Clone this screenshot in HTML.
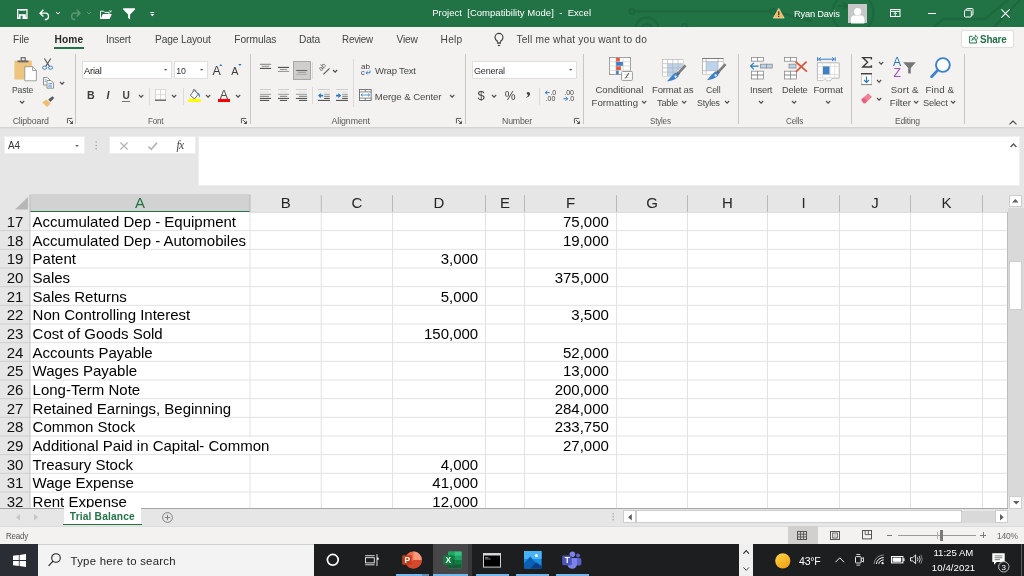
<!DOCTYPE html>
<html><head><meta charset="utf-8"><title>Excel</title>
<style>
html,body{margin:0;padding:0;}
body{width:1024px;height:576px;overflow:hidden;position:relative;background:#e6e6e6;font-family:"Liberation Sans",sans-serif;}
.a{position:absolute;display:block;box-sizing:border-box;}
.t{white-space:pre;}
svg{overflow:visible;}
#w{position:absolute;left:0;top:0;width:1024px;height:576px;will-change:transform;}
</style></head><body><div id="w">
<div class="a" style="left:0.00px;top:0.00px;width:1024.00px;height:27.00px;background:#217346;"></div>
<svg class="a" style="left:600.00px;top:0.00px;" width="424.00" height="27.00" viewBox="600 0 424 27"><defs><clipPath id="cpTB"><rect x="600" y="0" width="424" height="27"/></clipPath></defs><g clip-path="url(#cpTB)" fill="none" stroke="#1d683e" stroke-width="2.4"><circle cx="632" cy="11.3" r="2.6"/><path fill="none" d="M635 11.3 H770"/><circle cx="773" cy="11.3" r="2.6"/><path fill="none" d="M776 12 L812 21"/><circle cx="647" cy="29" r="11.5"/><circle cx="647" cy="29" r="5"/><circle cx="684.5" cy="26.5" r="2.6"/><circle cx="853" cy="13" r="20.5"/><path fill="none" d="M838 6 H846 M843 2 L847 6 L843 10"/><path fill="none" d="M933 28 L943 19 H985 L1009 -1"/><path fill="none" d="M993 28 L1021 -1"/></g></svg>
<svg class="a" style="left:16.60px;top:9.00px;" width="10.60" height="9.90" viewBox="0 0 10.6 9.9"><path d="M0.65 0.65 H9.95 V9.25 H0.65Z" fill="none" stroke="#fff" stroke-width="1.3"/><rect x="1.8" y="5.2" width="7" height="4.4" fill="#fff"/><rect x="3.6" y="6.7" width="1.9" height="3.2" fill="#217346"/><rect x="2.4" y="0.4" width="5.8" height="1.2" fill="#fff"/></svg>
<svg class="a" style="left:39.20px;top:8.60px;" width="12.10" height="11.00" viewBox="0 0 11.5 10.5"><path d="M4.2 0.8 L1 4 L4.2 7.2 M1 4 H7.2 A3.3 3.3 0 0 1 7.2 10 H5.5" fill="none" stroke="#fff" stroke-width="1.3"/></svg>
<svg class="a" style="left:55.00px;top:11.30px;" width="6.00" height="4.00" viewBox="-3.0 -2.0 6.0 4.0"><path d="M-2.0 -1.0 L0 1.0 L2.0 -1.0" fill="none" stroke="#fff" stroke-width="1"/></svg>
<svg class="a" style="left:69.40px;top:8.60px;" width="12.10" height="11.00" viewBox="0 0 11.5 10.5"><path d="M7.3 0.8 L10.5 4 L7.3 7.2 M10.5 4 H4.3 A3.3 3.3 0 0 0 4.3 10 H6" fill="none" stroke="#5f9a7b" stroke-width="1.3"/></svg>
<svg class="a" style="left:85.80px;top:11.30px;" width="6.00" height="4.00" viewBox="-3.0 -2.0 6.0 4.0"><path d="M-2.0 -1.0 L0 1.0 L2.0 -1.0" fill="none" stroke="#5f9a7b" stroke-width="1"/></svg>
<svg class="a" style="left:100.00px;top:9.50px;" width="12.00" height="9.50" viewBox="0 0 12 9.5"><path d="M0.5 9 V1.2 H3.6 L4.8 2.4 H9 V4" fill="none" stroke="#fff" stroke-width="1"/><path d="M0.6 9 L2.8 4 H11.8 L9.6 9Z" fill="#fff"/><path d="M9.5 0.3 L11 1.8 M11 0.3 V1.9 H9.4" fill="none" stroke="#fff" stroke-width="0.7"/></svg>
<svg class="a" style="left:122.80px;top:8.40px;" width="12.20" height="11.60" viewBox="0 0 12.2 11.6"><path d="M0.2 0.3 H12 V1.4 L7.1 6.4 V11.4 L5.1 10 V6.4 L0.2 1.4Z" fill="#fff"/></svg>
<svg class="a" style="left:150.00px;top:11.70px;" width="4.60" height="4.60" viewBox="0 0 4.6 4.6"><rect x="0.3" y="0" width="4" height="0.9" fill="#fff"/><path d="M0.3 2 H4.3 L2.3 4.3Z" fill="#fff"/></svg>
<div class="a t" style="left:432.20px;top:6.30px;font-size:9.5px;line-height:13px;color:#fff;letter-spacing:0.025px;">Project  [Compatibility Mode]  -  Excel</div>
<svg class="a" style="left:772.50px;top:7.50px;" width="11.50" height="10.50" viewBox="0 0 11.5 10.5"><path d="M5.75 0.4 L11.2 10.1 H0.3Z" fill="#f4b860" stroke="#fde9c4" stroke-width="0.6"/><rect x="5.2" y="3.4" width="1.1" height="3.6" fill="#222"/><rect x="5.2" y="7.8" width="1.1" height="1.2" fill="#222"/></svg>
<div class="a t" style="left:793.50px;top:6.70px;font-size:9.5px;line-height:13px;color:#fff;transform-origin:0 0;transform:scaleX(0.9793);letter-spacing:-0.200px;">Ryan Davis</div>
<div class="a" style="left:848.00px;top:3.50px;width:19.30px;height:19.50px;background:#c8c8c8;"></div>
<svg class="a" style="left:848.00px;top:3.50px;" width="19.30" height="19.50" viewBox="0 0 19.3 19.5"><circle cx="9.7" cy="7.6" r="3.6" fill="#fff"/><path d="M3 19.5 V15 Q3 11.6 6.5 11.4 H12.9 Q16.4 11.6 16.4 15 V19.5Z" fill="#fff"/></svg>
<svg class="a" style="left:889.50px;top:9.30px;" width="10.50" height="8.00" viewBox="0 0 10.5 8"><rect x="0.5" y="0.5" width="9.5" height="7" fill="none" stroke="#fff" stroke-width="1"/><path fill="none" d="M0.5 2.4 H10" stroke="#fff" stroke-width="1"/><path d="M5.25 3.4 V7 M3.6 5 L5.25 3.4 L6.9 5" fill="none" stroke="#fff" stroke-width="0.9"/></svg>
<div class="a" style="left:928.00px;top:12.60px;width:7.60px;height:1.00px;background:#fff;"></div>
<svg class="a" style="left:964.00px;top:8.30px;" width="9.50" height="9.50" viewBox="0 0 9.5 9.5"><rect x="0.5" y="2.2" width="6.8" height="6.8" rx="1" fill="none" stroke="#fff" stroke-width="1"/><path d="M2.3 2 V1.5 Q2.3 0.5 3.3 0.5 H8 Q9 0.5 9 1.5 V6.2 Q9 7.2 8 7.2 H7.6" fill="none" stroke="#fff" stroke-width="1"/></svg>
<svg class="a" style="left:1001.00px;top:8.60px;" width="9.00" height="9.00" viewBox="0 0 9 9"><path fill="none" d="M0.4 0.4 L8.6 8.6 M8.6 0.4 L0.4 8.6" stroke="#fff" stroke-width="1.1"/></svg>
<div class="a" style="left:0.00px;top:27.00px;width:1024.00px;height:100.00px;background:#f3f2f1;"></div>
<div class="a t" style="left:13.00px;top:33.00px;font-size:10.2px;line-height:13px;color:#444;letter-spacing:-0.045px;">File</div>
<div class="a t" style="left:54.40px;top:33.00px;font-size:10.2px;line-height:13px;color:#2b2b2b;font-weight:700;letter-spacing:0.187px;">Home</div>
<div class="a" style="left:54.00px;top:46.70px;width:30.00px;height:2.60px;background:#217346;"></div>
<div class="a t" style="left:106.00px;top:33.00px;font-size:10.2px;line-height:13px;color:#444;letter-spacing:-0.142px;">Insert</div>
<div class="a t" style="left:155.00px;top:33.00px;font-size:10.2px;line-height:13px;color:#444;letter-spacing:-0.148px;">Page Layout</div>
<div class="a t" style="left:234.30px;top:33.00px;font-size:10.2px;line-height:13px;color:#444;letter-spacing:-0.044px;">Formulas</div>
<div class="a t" style="left:299.00px;top:33.00px;font-size:10.2px;line-height:13px;color:#444;letter-spacing:-0.081px;">Data</div>
<div class="a t" style="left:342.30px;top:33.00px;font-size:10.2px;line-height:13px;color:#444;transform-origin:0 0;transform:scaleX(0.9617);letter-spacing:-0.200px;">Review</div>
<div class="a t" style="left:396.50px;top:33.00px;font-size:10.2px;line-height:13px;color:#444;letter-spacing:-0.141px;">View</div>
<div class="a t" style="left:440.50px;top:33.00px;font-size:10.2px;line-height:13px;color:#444;letter-spacing:0.274px;">Help</div>
<svg class="a" style="left:493.50px;top:33.00px;" width="10.00" height="13.40" viewBox="0 0 10 13.4"><path d="M3.3 9.2 V8 Q1 6.4 1 4.4 A4 4 0 0 1 9 4.4 Q9 6.4 6.7 8 V9.2" fill="none" stroke="#3e3e3e" stroke-width="1.15"/><path fill="none" d="M3 10 H7" stroke="#3e3e3e" stroke-width="1.5"/><path fill="none" d="M3.9 12.5 H6.1" stroke="#3e3e3e" stroke-width="1.1"/></svg>
<div class="a t" style="left:516.50px;top:33.00px;font-size:10.2px;line-height:13px;color:#444;letter-spacing:0.179px;">Tell me what you want to do</div>
<div class="a" style="left:961.00px;top:30.00px;width:53.30px;height:18.00px;background:#fff;border:1px solid #e1dfdd;border-radius:2px;"></div>
<svg class="a" style="left:968.50px;top:34.30px;" width="9.50" height="9.50" viewBox="0 0 9.5 9.5"><path d="M3.5 2.3 H0.6 V9 H7.4 V6.3" fill="none" stroke="#217346" stroke-width="1"/><path d="M2.8 6.6 Q3 3.3 6.3 3.1 V1.2 L9.1 3.8 L6.3 6.4 V4.6 Q4 4.6 2.8 6.6Z" fill="none" stroke="#217346" stroke-width="0.9"/></svg>
<div class="a t" style="left:980.00px;top:32.60px;font-size:10.2px;line-height:13px;color:#217346;font-weight:700;transform-origin:0 0;transform:scaleX(0.9728);letter-spacing:-0.200px;">Share</div>
<div class="a" style="left:0.00px;top:127.00px;width:1024.00px;height:3.00px;background:linear-gradient(#d2d0ce,#e1e1e1 60%,#e6e6e6);"></div>
<div class="a" style="left:3.60px;top:136.20px;width:81.00px;height:18.20px;background:#fff;border:1px solid #efefef;"></div>
<div class="a t" style="left:7.60px;top:139.00px;font-size:10px;line-height:13px;color:#333;transform-origin:0 0;transform:scaleX(0.9891);letter-spacing:-0.200px;">A4</div>
<svg class="a" style="left:75.00px;top:144.60px;" width="4.00" height="2.00" viewBox="-2.0 -1.0 4.0 2.0"><path d="M-2.0 -1.0 L2.0 -1.0 L0 1.0Z" fill="#666"/></svg>
<svg class="a" style="left:95.00px;top:140.00px;" width="3.00" height="10.00" viewBox="0 0 3 10"><circle cx="1.2" cy="2" r="0.75" fill="#9a9a9a"/><circle cx="1.2" cy="5.4" r="0.75" fill="#9a9a9a"/><circle cx="1.2" cy="8.8" r="0.75" fill="#9a9a9a"/></svg>
<div class="a" style="left:109.00px;top:136.20px;width:87.40px;height:18.20px;background:#fff;border:1px solid #efefef;"></div>
<svg class="a" style="left:119.50px;top:141.50px;" width="8.00" height="8.00" viewBox="0 0 8 8"><path fill="none" d="M0.4 0.4 L7.6 7.6 M7.6 0.4 L0.4 7.6" stroke="#b6b6b6" stroke-width="1.35"/></svg>
<svg class="a" style="left:148.00px;top:141.50px;" width="9.50" height="8.00" viewBox="0 0 9.5 8"><path d="M0.5 4.6 L3.3 7.3 L9 0.6" fill="none" stroke="#b6b6b6" stroke-width="1.7"/></svg>
<div class="a t" style="left:176.5px;top:138px;font-family:'Liberation Serif',serif;font-style:italic;font-size:11.5px;line-height:14px;color:#444;letter-spacing:-0.6px;">fx</div>
<div class="a" style="left:198.30px;top:136.20px;width:822.00px;height:49.60px;background:#fff;border:1px solid #efefef;"></div>
<svg class="a" style="left:1009.50px;top:143.00px;" width="7.00" height="4.50" viewBox="0 0 7 4.5"><path d="M0.6 4 L3.5 1 L6.4 4" fill="none" stroke="#555" stroke-width="1.3"/></svg>
<div class="a" style="left:74.70px;top:54.00px;width:1.00px;height:70.00px;background:#c8c6c4;"></div>
<div class="a" style="left:250.10px;top:54.00px;width:1.00px;height:70.00px;background:#c8c6c4;"></div>
<div class="a" style="left:465.10px;top:54.00px;width:1.00px;height:70.00px;background:#c8c6c4;"></div>
<div class="a" style="left:583.20px;top:54.00px;width:1.00px;height:70.00px;background:#c8c6c4;"></div>
<div class="a" style="left:738.00px;top:54.00px;width:1.00px;height:70.00px;background:#c8c6c4;"></div>
<div class="a" style="left:850.70px;top:54.00px;width:1.00px;height:70.00px;background:#c8c6c4;"></div>
<div class="a" style="left:963.70px;top:54.00px;width:1.00px;height:70.00px;background:#c8c6c4;"></div>
<svg class="a" style="left:13.70px;top:56.80px;" width="22.80" height="24.20" viewBox="0 0 22.8 24.2"><rect x="0.4" y="3.4" width="17.4" height="19.1" rx="0.6" fill="#eec57f"/><rect x="7.2" y="0.7" width="4" height="3.4" fill="none" stroke="#6a6a6a" stroke-width="1.2"/><rect x="3.5" y="3.5" width="10.9" height="1.9" fill="#6a6a6a"/><path d="M10.8 9.7 H18.6 L22.4 13.5 V23.8 H10.8Z" fill="#fff" stroke="#8a8a8a" stroke-width="0.8"/><path d="M18.6 9.7 V13.5 H22.4" fill="none" stroke="#8a8a8a" stroke-width="0.8"/></svg>
<div class="a t" style="left:12.20px;top:83.00px;font-size:9.6px;line-height:13px;color:#484848;transform-origin:0 0;transform:scaleX(0.9011);letter-spacing:-0.200px;">Paste</div>
<svg class="a" style="left:19.40px;top:99.95px;" width="6.20" height="4.10" viewBox="-3.1 -2.05 6.2 4.1"><path d="M-2.1 -1.05 L0 1.05 L2.1 -1.05" fill="none" stroke="#505050" stroke-width="1.15"/></svg>
<svg class="a" style="left:42.00px;top:57.60px;" width="11.00" height="11.80" viewBox="0 0 11 11.8"><path d="M2.4 0.5 L7.4 8.2 M8.8 0.5 L3.8 8.2" fill="none" stroke="#505050" stroke-width="1.1"/><ellipse cx="2.6" cy="9.7" rx="2.1" ry="1.6" fill="none" stroke="#2b78c4" stroke-width="0.9"/><ellipse cx="8.6" cy="9.7" rx="2.1" ry="1.6" fill="none" stroke="#2b78c4" stroke-width="0.9"/></svg>
<svg class="a" style="left:42.50px;top:77.20px;" width="11.00" height="11.60" viewBox="0 0 11 11.6"><path d="M0.5 0.5 H4.3 L6.4 2.6 V8 H0.5Z" fill="#fff" stroke="#777" stroke-width="0.8"/><path d="M4 3.5 H8 L10.5 6 V11.2 H4Z" fill="#fff" stroke="#777" stroke-width="0.8"/><path fill="none" d="M5.3 6.6 H9 M5.3 8.2 H9 M5.3 9.8 H9" stroke="#2b78c4" stroke-width="0.7"/><path fill="none" d="M1.6 2.8 H3.6 M1.6 4.4 H3.2" stroke="#2b78c4" stroke-width="0.7"/></svg>
<svg class="a" style="left:58.90px;top:81.15px;" width="6.20" height="4.10" viewBox="-3.1 -2.05 6.2 4.1"><path d="M-2.1 -1.05 L0 1.05 L2.1 -1.05" fill="none" stroke="#505050" stroke-width="1.15"/></svg>
<svg class="a" style="left:41.80px;top:96.20px;" width="12.40" height="11.20" viewBox="0 0 12.4 11.2"><path d="M6.2 3.6 L10.6 0.2 L12.2 1.9 L8.4 6Z" fill="#5a5a5a"/><path d="M4.6 3.6 L8.6 7.4 L5.2 11 L0.2 6.6Z" fill="#eebd6e"/></svg>
<div class="a t" style="left:12.70px;top:115.10px;font-size:8.8px;line-height:12px;color:#5a5856;letter-spacing:-0.196px;">Clipboard</div>
<svg class="a" style="left:66.50px;top:118.40px;" width="6.20" height="6.20" viewBox="0 0 6.2 6.2"><path d="M0.45 5.2 V0.45 H5.2" fill="none" stroke="#4a4a4a" stroke-width="0.9"/><path d="M2 2 L5 5" fill="none" stroke="#4a4a4a" stroke-width="0.9"/><path d="M5.9 2.6 V5.9 H2.6Z" fill="#4a4a4a"/></svg>
<div class="a" style="left:82.40px;top:61.30px;width:89.60px;height:18.00px;background:#fff;border:1px solid #e1dfdd;"></div>
<div class="a t" style="left:84.20px;top:63.80px;font-size:9.8px;line-height:13px;color:#222;transform-origin:0 0;transform:scaleX(0.9466);letter-spacing:-0.200px;">Arial</div>
<svg class="a" style="left:164.30px;top:69.35px;" width="3.40" height="1.70" viewBox="-1.7 -0.85 3.4 1.7"><path d="M-1.7 -0.85 L1.7 -0.85 L0 0.85Z" fill="#555"/></svg>
<div class="a" style="left:174.00px;top:61.30px;width:34.00px;height:18.00px;background:#fff;border:1px solid #e1dfdd;"></div>
<div class="a t" style="left:176.20px;top:64.80px;font-size:8.8px;line-height:12px;color:#333;">10</div>
<svg class="a" style="left:200.10px;top:69.35px;" width="3.40" height="1.70" viewBox="-1.7 -0.85 3.4 1.7"><path d="M-1.7 -0.85 L1.7 -0.85 L0 0.85Z" fill="#555"/></svg>
<div class="a t" style="left:212.60px;top:62.80px;font-size:12.4px;line-height:16px;color:#3c3c3c;">A</div>
<svg class="a" style="left:219.40px;top:64.20px;overflow:visible" width="3.60" height="1.90" viewBox="0 0 4 2.4"><path d="M0 2.4 L2 0 L4 2.4Z" fill="#2b78c4"/></svg>
<div class="a t" style="left:231.20px;top:63.80px;font-size:10.8px;line-height:14px;color:#3c3c3c;">A</div>
<svg class="a" style="left:237.50px;top:64.20px;overflow:visible" width="3.80" height="2.00" viewBox="0 0 4 2.4"><path d="M0 0 L2 2.4 L4 0Z" fill="#2b78c4"/></svg>
<div class="a t" style="left:87.00px;top:88.00px;font-size:10.6px;line-height:14px;color:#3b3b3b;font-weight:700;">B</div>
<div class="a t" style="left:106.40px;top:88.00px;font-size:10.6px;line-height:14px;color:#3b3b3b;font-weight:700;font-style:italic;">I</div>
<div class="a t" style="left:122.50px;top:89.00px;font-size:10.2px;line-height:13px;color:#444;font-weight:700;">U</div>
<div class="a" style="left:122.40px;top:100.60px;width:7.80px;height:0.80px;background:#777;"></div>
<svg class="a" style="left:137.50px;top:94.35px;" width="6.20" height="4.10" viewBox="-3.1 -2.05 6.2 4.1"><path d="M-2.1 -1.05 L0 1.05 L2.1 -1.05" fill="none" stroke="#505050" stroke-width="1.15"/></svg>
<div class="a" style="left:149.00px;top:87.50px;width:1.00px;height:17.00px;background:#dcdad8;"></div>
<svg class="a" style="left:154.70px;top:89.00px;" width="11.00" height="11.80" viewBox="0 0 11 11.8"><rect x="0.4" y="0.4" width="10.2" height="10.6" fill="#fff" stroke="#d2d0ce" stroke-width="0.8"/><path fill="none" d="M5.5 0.4 V11 M0.4 5.7 H10.6" stroke="#d2d0ce" stroke-width="0.8"/><path fill="none" d="M0 11.2 H11" stroke="#555" stroke-width="1.2"/></svg>
<svg class="a" style="left:171.30px;top:94.35px;" width="6.20" height="4.10" viewBox="-3.1 -2.05 6.2 4.1"><path d="M-2.1 -1.05 L0 1.05 L2.1 -1.05" fill="none" stroke="#505050" stroke-width="1.15"/></svg>
<div class="a" style="left:182.80px;top:87.50px;width:1.00px;height:17.00px;background:#dcdad8;"></div>
<svg class="a" style="left:187.50px;top:88.60px;" width="14.00" height="11.00" viewBox="0 0 14 11"><path d="M2.4 6.3 L6.2 1.4 L10.3 5.1 L6.5 9.9Z" fill="#fff" stroke="#5a5a5a" stroke-width="0.9"/><path d="M5.2 2.6 Q4.4 0.3 6.2 0.4 Q7.7 0.5 8.4 3.2" fill="none" stroke="#6a6a6a" stroke-width="0.8"/><path d="M9.6 3.5 Q12.4 4.4 11.9 9 Q10.9 6.2 9.9 5.3Z" fill="#2b78c4"/></svg>
<div class="a" style="left:187.80px;top:99.00px;width:13.20px;height:2.70px;background:#ffff00;"></div>
<svg class="a" style="left:204.90px;top:94.35px;" width="6.20" height="4.10" viewBox="-3.1 -2.05 6.2 4.1"><path d="M-2.1 -1.05 L0 1.05 L2.1 -1.05" fill="none" stroke="#505050" stroke-width="1.15"/></svg>
<div class="a t" style="left:219.80px;top:87.00px;font-size:12.4px;line-height:16px;color:#505050;">A</div>
<div class="a" style="left:217.80px;top:99.00px;width:12.70px;height:2.80px;background:#ff0000;"></div>
<svg class="a" style="left:234.80px;top:94.35px;" width="6.20" height="4.10" viewBox="-3.1 -2.05 6.2 4.1"><path d="M-2.1 -1.05 L0 1.05 L2.1 -1.05" fill="none" stroke="#505050" stroke-width="1.15"/></svg>
<div class="a t" style="left:148.20px;top:115.10px;font-size:8.8px;line-height:12px;color:#5a5856;transform-origin:0 0;transform:scaleX(0.9114);letter-spacing:-0.200px;">Font</div>
<svg class="a" style="left:241.40px;top:118.40px;" width="6.20" height="6.20" viewBox="0 0 6.2 6.2"><path d="M0.45 5.2 V0.45 H5.2" fill="none" stroke="#4a4a4a" stroke-width="0.9"/><path d="M2 2 L5 5" fill="none" stroke="#4a4a4a" stroke-width="0.9"/><path d="M5.9 2.6 V5.9 H2.6Z" fill="#4a4a4a"/></svg>
<svg class="a" style="left:0.00px;top:0.00px;" width="1.00" height="1.00" viewBox="0 0 1 1"><path d="M259.90 64.30 H271.10" stroke="#7a7a7a" stroke-width="0.95" fill="none"/><path d="M261.80 66.30 H269.10" stroke="#8a8a8a" stroke-width="0.95" fill="none"/><path d="M259.90 68.40 H271.10" stroke="#4a4a4a" stroke-width="1.1" fill="none"/></svg>
<svg class="a" style="left:0.00px;top:0.00px;" width="1.00" height="1.00" viewBox="0 0 1 1"><path d="M277.90 67.40 H289.10" stroke="#4a4a4a" stroke-width="1.1" fill="none"/><path d="M279.90 69.40 H287.20" stroke="#8a8a8a" stroke-width="0.95" fill="none"/><path d="M277.90 71.40 H289.10" stroke="#8a8a8a" stroke-width="0.95" fill="none"/></svg>
<div class="a" style="left:293.00px;top:61.00px;width:17.50px;height:18.60px;background:#d0cecc;border:1px solid #a9a7a5;"></div>
<svg class="a" style="left:0.00px;top:0.00px;" width="1.00" height="1.00" viewBox="0 0 1 1"><path d="M296.20 70.50 H307.20" stroke="#666" stroke-width="1.1" fill="none"/><path d="M298.00 72.40 H305.80" stroke="#999" stroke-width="0.95" fill="none"/><path d="M296.20 74.40 H307.20" stroke="#aaa" stroke-width="0.95" fill="none"/></svg>
<div class="a" style="left:312.00px;top:62.30px;width:1.00px;height:16.80px;background:#dcdad8;"></div>
<svg class="a" style="left:318.60px;top:64.40px;" width="11.50" height="11.50" viewBox="0 0 11.5 11.5"><path fill="none" d="M4.4 10.4 L10.5 4.4" stroke="#555" stroke-width="1.1"/><text x="0" y="0" transform="translate(2.2 7.4) rotate(-48)" font-family="Liberation Sans" font-size="7" fill="#555">ab</text></svg>
<svg class="a" style="left:332.40px;top:68.55px;" width="6.20" height="4.10" viewBox="-3.1 -2.05 6.2 4.1"><path d="M-2.1 -1.05 L0 1.05 L2.1 -1.05" fill="none" stroke="#505050" stroke-width="1.15"/></svg>
<svg class="a" style="left:0.00px;top:0.00px;" width="1.00" height="1.00" viewBox="0 0 1 1"><path d="M259.90 89.50 H271.10" stroke="#cfcdcb" stroke-width="1.0" fill="none"/><path d="M259.90 91.90 H269.20" stroke="#e2e0de" stroke-width="1.0" fill="none"/><path d="M259.90 94.30 H271.10" stroke="#9a9a9a" stroke-width="1.0" fill="none"/><path d="M259.90 96.30 H269.20" stroke="#777" stroke-width="1.0" fill="none"/><path d="M259.90 98.40 H271.10" stroke="#444" stroke-width="1.0" fill="none"/><path d="M259.90 100.40 H269.20" stroke="#444" stroke-width="1.0" fill="none"/></svg>
<svg class="a" style="left:0.00px;top:0.00px;" width="1.00" height="1.00" viewBox="0 0 1 1"><path d="M277.90 89.50 H289.10" stroke="#cfcdcb" stroke-width="1.0" fill="none"/><path d="M279.90 91.90 H287.20" stroke="#e2e0de" stroke-width="1.0" fill="none"/><path d="M277.90 94.30 H289.10" stroke="#9a9a9a" stroke-width="1.0" fill="none"/><path d="M279.90 96.30 H287.20" stroke="#777" stroke-width="1.0" fill="none"/><path d="M277.90 98.40 H289.10" stroke="#444" stroke-width="1.0" fill="none"/><path d="M279.90 100.40 H287.20" stroke="#444" stroke-width="1.0" fill="none"/></svg>
<svg class="a" style="left:0.00px;top:0.00px;" width="1.00" height="1.00" viewBox="0 0 1 1"><path d="M295.90 89.50 H307.10" stroke="#cfcdcb" stroke-width="1.0" fill="none"/><path d="M298.90 91.90 H307.10" stroke="#e2e0de" stroke-width="1.0" fill="none"/><path d="M295.90 94.30 H307.10" stroke="#9a9a9a" stroke-width="1.0" fill="none"/><path d="M298.90 96.30 H307.10" stroke="#777" stroke-width="1.0" fill="none"/><path d="M295.90 98.40 H307.10" stroke="#444" stroke-width="1.0" fill="none"/><path d="M298.90 100.40 H307.10" stroke="#444" stroke-width="1.0" fill="none"/></svg>
<div class="a" style="left:312.00px;top:87.30px;width:1.00px;height:17.00px;background:#dcdad8;"></div>
<svg class="a" style="left:0.00px;top:0.00px;" width="1.00" height="1.00" viewBox="0 0 1 1"><path d="M318.00 89.50 H330.00" stroke="#cfcdcb" stroke-width="1.0" fill="none"/><path d="M324.20 91.90 H329.80" stroke="#e2e0de" stroke-width="1.0" fill="none"/><path d="M324.20 94.30 H329.80" stroke="#9a9a9a" stroke-width="1.0" fill="none"/><path d="M324.20 96.30 H329.80" stroke="#777" stroke-width="1.0" fill="none"/><path d="M324.20 98.40 H329.80" stroke="#444" stroke-width="1.0" fill="none"/><path d="M318.00 100.40 H330.00" stroke="#444" stroke-width="1.0" fill="none"/></svg>
<svg class="a" style="left:318.00px;top:93.00px;" width="5.20" height="5.20" viewBox="0 0 5.2 5.2"><path d="M5.2 1.8 H2.8 V0 L0 2.6 L2.8 5.2 V3.4 H5.2Z" fill="#2b78c4"/></svg>
<svg class="a" style="left:0.00px;top:0.00px;" width="1.00" height="1.00" viewBox="0 0 1 1"><path d="M336.00 89.50 H348.00" stroke="#cfcdcb" stroke-width="1.0" fill="none"/><path d="M342.20 91.90 H347.80" stroke="#e2e0de" stroke-width="1.0" fill="none"/><path d="M342.20 94.30 H347.80" stroke="#9a9a9a" stroke-width="1.0" fill="none"/><path d="M342.20 96.30 H347.80" stroke="#777" stroke-width="1.0" fill="none"/><path d="M342.20 98.40 H347.80" stroke="#444" stroke-width="1.0" fill="none"/><path d="M336.00 100.40 H348.00" stroke="#444" stroke-width="1.0" fill="none"/></svg>
<svg class="a" style="left:336.00px;top:93.00px;" width="5.20" height="5.20" viewBox="0 0 5.2 5.2"><path d="M0 1.8 H2.4 V0 L5.2 2.6 L2.4 5.2 V3.4 H0Z" fill="#2b78c4"/></svg>
<div class="a" style="left:352.80px;top:59.00px;width:1.00px;height:47.60px;background:#dcdad8;"></div>
<svg class="a" style="left:361.00px;top:64.40px;" width="9.60" height="10.60" viewBox="0 0 9.6 10.6"><text x="0" y="5" font-family="Liberation Sans" font-size="7.4" fill="#444" textLength="9" lengthAdjust="spacingAndGlyphs">ab</text><text x="0" y="10.6" font-family="Liberation Sans" font-size="7.4" fill="#444">c</text><path d="M9 6.4 V8.8 H5 M6.6 7.2 L5 8.8 L6.6 10.4" fill="none" stroke="#2b78c4" stroke-width="0.9"/></svg>
<div class="a t" style="left:374.80px;top:63.80px;font-size:9.6px;line-height:13px;color:#484848;transform-origin:0 0;transform:scaleX(0.9937);letter-spacing:-0.200px;">Wrap Text</div>
<svg class="a" style="left:359.00px;top:89.20px;" width="12.60" height="12.00" viewBox="0 0 12.6 12"><rect x="0.45" y="0.45" width="11.7" height="11.1" fill="#fff" stroke="#6a6a6a" stroke-width="0.9"/><path fill="none" d="M6.3 0.4 V2.8 M6.3 9.2 V11.6 M0.4 2.9 H12.2 M0.4 9.1 H12.2" stroke="#6a6a6a" stroke-width="0.8"/><path d="M2 6 H10.6 M3.5 4.6 L2 6 L3.5 7.4 M9.1 4.6 L10.6 6 L9.1 7.4" fill="none" stroke="#2b78c4" stroke-width="0.8"/></svg>
<div class="a t" style="left:374.80px;top:90.00px;font-size:9.6px;line-height:13px;color:#484848;letter-spacing:-0.074px;">Merge &amp; Center</div>
<svg class="a" style="left:448.60px;top:94.35px;" width="6.20" height="4.10" viewBox="-3.1 -2.05 6.2 4.1"><path d="M-2.1 -1.05 L0 1.05 L2.1 -1.05" fill="none" stroke="#505050" stroke-width="1.15"/></svg>
<div class="a t" style="left:331.50px;top:115.10px;font-size:8.8px;line-height:12px;color:#5a5856;letter-spacing:-0.079px;">Alignment</div>
<svg class="a" style="left:456.20px;top:118.40px;" width="6.20" height="6.20" viewBox="0 0 6.2 6.2"><path d="M0.45 5.2 V0.45 H5.2" fill="none" stroke="#4a4a4a" stroke-width="0.9"/><path d="M2 2 L5 5" fill="none" stroke="#4a4a4a" stroke-width="0.9"/><path d="M5.9 2.6 V5.9 H2.6Z" fill="#4a4a4a"/></svg>
<div class="a" style="left:472.40px;top:61.30px;width:104.20px;height:18.00px;background:#fff;border:1px solid #e1dfdd;"></div>
<div class="a t" style="left:474.00px;top:63.80px;font-size:9.6px;line-height:13px;color:#333;transform-origin:0 0;transform:scaleX(0.9408);letter-spacing:-0.200px;">General</div>
<svg class="a" style="left:568.90px;top:69.35px;" width="3.40" height="1.70" viewBox="-1.7 -0.85 3.4 1.7"><path d="M-1.7 -0.85 L1.7 -0.85 L0 0.85Z" fill="#555"/></svg>
<div class="a t" style="left:477.40px;top:87.20px;font-size:13px;line-height:17px;color:#444;">$</div>
<svg class="a" style="left:491.20px;top:94.35px;" width="6.20" height="4.10" viewBox="-3.1 -2.05 6.2 4.1"><path d="M-2.1 -1.05 L0 1.05 L2.1 -1.05" fill="none" stroke="#505050" stroke-width="1.15"/></svg>
<div class="a t" style="left:504.80px;top:88.30px;font-size:12.2px;line-height:16px;color:#444;">%</div>
<div class="a t" style="left:526px;top:79.4px;font-size:19px;line-height:20px;font-weight:700;color:#444;font-family:'Liberation Serif',serif;">,</div>
<div class="a" style="left:539.00px;top:87.50px;width:1.00px;height:17.00px;background:#dcdad8;"></div>
<svg class="a" style="left:544.60px;top:89.80px;" width="12.00" height="12.00" viewBox="0 0 12 12"><path d="M0.4 2.6 H4.6 M2.3 0.6 L0.4 2.6 L2.3 4.6" fill="none" stroke="#2b78c4" stroke-width="1"/><text x="5.4" y="5" font-family="Liberation Sans" font-size="7" fill="#444">.0</text><text x="0.6" y="11.2" font-family="Liberation Sans" font-size="7" fill="#444">.00</text></svg>
<svg class="a" style="left:562.80px;top:89.80px;" width="12.00" height="12.00" viewBox="0 0 12 12"><text x="1.2" y="5" font-family="Liberation Sans" font-size="7" fill="#444">.00</text><path d="M0.4 8.8 H4.6 M2.7 6.8 L4.6 8.8 L2.7 10.8" fill="none" stroke="#2b78c4" stroke-width="1"/><text x="5.4" y="11.2" font-family="Liberation Sans" font-size="7" fill="#444">.0</text></svg>
<div class="a t" style="left:502.20px;top:115.10px;font-size:8.8px;line-height:12px;color:#5a5856;transform-origin:0 0;transform:scaleX(0.9968);letter-spacing:-0.200px;">Number</div>
<svg class="a" style="left:574.30px;top:118.40px;" width="6.20" height="6.20" viewBox="0 0 6.2 6.2"><path d="M0.45 5.2 V0.45 H5.2" fill="none" stroke="#4a4a4a" stroke-width="0.9"/><path d="M2 2 L5 5" fill="none" stroke="#4a4a4a" stroke-width="0.9"/><path d="M5.9 2.6 V5.9 H2.6Z" fill="#4a4a4a"/></svg>
<svg class="a" style="left:609.00px;top:57.20px;" width="24.00" height="24.00" viewBox="0 0 24 24"><rect x="0.4" y="0.4" width="21.2" height="17.2" fill="#fff" stroke="#8a8a8a" stroke-width="0.8"/><path fill="none" d="M0.4 4.7 H21.6 M0.4 9 H21.6 M0.4 13.3 H21.6 M6.8 0.4 V17.6 M14.2 0.4 V17.6" stroke="#cfcfcf" stroke-width="0.7"/><rect x="7.1" y="0.7" width="3.7" height="3.8" fill="#e0593a"/><rect x="7.1" y="5" width="6.8" height="3.8" fill="#3f7fc4"/><rect x="7.1" y="9.3" width="4.8" height="3.8" fill="#e0593a"/><rect x="7.1" y="13.6" width="2.6" height="3.7" fill="#3f7fc4"/><rect x="12.6" y="14.5" width="10.8" height="8.9" rx="1" fill="#fff" stroke="#8e8e8e" stroke-width="0.9"/><path fill="none" d="M15.4 17.3 H20.7 M15.4 20.4 H20.7" stroke="#c6c6c6" stroke-width="0.7"/><path fill="none" d="M16.3 21.5 L19.8 16.1" stroke="#333" stroke-width="0.9"/></svg>
<div class="a t" style="left:595.40px;top:83.00px;font-size:9.6px;line-height:13px;color:#484848;letter-spacing:-0.013px;">Conditional</div>
<div class="a t" style="left:591.50px;top:95.70px;font-size:9.6px;line-height:13px;color:#484848;letter-spacing:0.069px;">Formatting</div>
<svg class="a" style="left:640.80px;top:100.15px;" width="6.20" height="4.10" viewBox="-3.1 -2.05 6.2 4.1"><path d="M-2.1 -1.05 L0 1.05 L2.1 -1.05" fill="none" stroke="#505050" stroke-width="1.15"/></svg>
<svg class="a" style="left:662.40px;top:58.60px;" width="25.00" height="23.00" viewBox="0 0 25 23"><defs><clipPath id="cpT"><path fill="none" d="M0 0 H21.5 V7 L9 17.6 H0Z"/></clipPath></defs><g clip-path="url(#cpT)"><rect x="0.35" y="0.35" width="20.9" height="17" fill="#fff" stroke="#b4b4b4" stroke-width="0.7"/><rect x="5.6" y="4.7" width="15.6" height="12.6" fill="#bdd3ec"/><path fill="none" d="M0.4 4.7 H21.2 M0.4 8.9 H21.2 M0.4 13.1 H21.2 M5.6 0.4 V17.3 M10.8 0.4 V17.3 M16 0.4 V17.3" stroke="#b4b4b4" stroke-width="0.7"/></g><g transform="translate(24.2 5.6)"><path d="M-0.7 0.7 L-9.2 10" stroke="#7d7d7d" stroke-width="2.7" fill="none"/><path d="M-7.4 8 L-9.2 10" stroke="#5f6b78" stroke-width="3.3" fill="none"/><path d="M-10.6 7.9 Q-14.2 10.4 -19.2 16.9 Q-11.2 16.2 -7.5 11.7Z" fill="#3b82cc"/><circle cx="-10.6" cy="12" r="1.15" fill="#fff"/></g></svg>
<div class="a t" style="left:651.50px;top:83.00px;font-size:9.6px;line-height:13px;color:#484848;transform-origin:0 0;transform:scaleX(0.9975);letter-spacing:-0.200px;">Format as</div>
<div class="a t" style="left:657.30px;top:95.70px;font-size:9.6px;line-height:13px;color:#484848;transform-origin:0 0;transform:scaleX(0.9527);letter-spacing:-0.200px;">Table</div>
<svg class="a" style="left:681.20px;top:100.15px;" width="6.20" height="4.10" viewBox="-3.1 -2.05 6.2 4.1"><path d="M-2.1 -1.05 L0 1.05 L2.1 -1.05" fill="none" stroke="#505050" stroke-width="1.15"/></svg>
<svg class="a" style="left:702.20px;top:57.60px;" width="25.00" height="24.00" viewBox="0 0 25 24"><defs><clipPath id="cpC"><path fill="none" d="M0 0 H21.6 V7.6 L11 16.6 H0Z"/></clipPath></defs><g clip-path="url(#cpC)"><rect x="0.35" y="0.35" width="20.9" height="16" fill="#fff" stroke="#9a9a9a" stroke-width="0.7"/><rect x="4.1" y="3.4" width="12" height="9.3" fill="#bdd3ec"/><path fill="none" d="M0.4 3.4 H21.2 M0.4 12.7 H21.2 M4.1 0.4 V16.3 M16.1 0.4 V16.3" stroke="#b0b0b0" stroke-width="0.7"/><path fill="none" d="M0 0.5 H21.6" stroke="#7a7a7a" stroke-width="1"/></g><g transform="translate(24.2 5.4)"><path d="M-0.7 0.7 L-9.2 10" stroke="#7d7d7d" stroke-width="2.7" fill="none"/><path d="M-7.4 8 L-9.2 10" stroke="#5f6b78" stroke-width="3.3" fill="none"/><path d="M-10.6 7.9 Q-14.2 10.4 -19.2 16.9 Q-11.2 16.2 -7.5 11.7Z" fill="#3b82cc"/><circle cx="-10.6" cy="12" r="1.15" fill="#fff"/></g></svg>
<div class="a t" style="left:706.40px;top:83.00px;font-size:9.6px;line-height:13px;color:#484848;transform-origin:0 0;transform:scaleX(0.9161);letter-spacing:-0.200px;">Cell</div>
<div class="a t" style="left:697.40px;top:95.70px;font-size:9.6px;line-height:13px;color:#484848;transform-origin:0 0;transform:scaleX(0.9148);letter-spacing:-0.200px;">Styles</div>
<svg class="a" style="left:723.50px;top:100.15px;" width="6.20" height="4.10" viewBox="-3.1 -2.05 6.2 4.1"><path d="M-2.1 -1.05 L0 1.05 L2.1 -1.05" fill="none" stroke="#505050" stroke-width="1.15"/></svg>
<div class="a t" style="left:649.70px;top:115.10px;font-size:8.8px;line-height:12px;color:#5a5856;transform-origin:0 0;transform:scaleX(0.9101);letter-spacing:-0.200px;">Styles</div>
<svg class="a" style="left:750.30px;top:57.40px;" width="22.60" height="22.40" viewBox="0 0 22.6 22.4"><rect x="1.4" y="0.4" width="6" height="3.8" fill="#fff" stroke="#8a8a8a" stroke-width="0.8"/><rect x="7.4" y="0.4" width="6" height="3.8" fill="#fff" stroke="#8a8a8a" stroke-width="0.8"/><rect x="1.4" y="14.2" width="6" height="3.9" fill="#fff" stroke="#8a8a8a" stroke-width="0.8"/><rect x="7.4" y="14.2" width="6" height="3.9" fill="#fff" stroke="#8a8a8a" stroke-width="0.8"/><rect x="1.4" y="18.1" width="6" height="3.9" fill="#fff" stroke="#8a8a8a" stroke-width="0.8"/><rect x="7.4" y="18.1" width="6" height="3.9" fill="#fff" stroke="#8a8a8a" stroke-width="0.8"/><rect x="10.6" y="7.2" width="5.8" height="3.8" fill="#bdd3ec" stroke="#8a8a8a" stroke-width="0.8"/><rect x="16.4" y="7.2" width="5.8" height="3.8" fill="#bdd3ec" stroke="#8a8a8a" stroke-width="0.8"/><path d="M8.6 9.1 H0.6 M3.8 5.8 L0.6 9.1 L3.8 12.4" fill="none" stroke="#2b78c4" stroke-width="1.2"/></svg>
<div class="a t" style="left:750.30px;top:83.00px;font-size:9.6px;line-height:13px;color:#484848;transform-origin:0 0;transform:scaleX(0.9736);letter-spacing:-0.200px;">Insert</div>
<svg class="a" style="left:757.90px;top:100.15px;" width="6.20" height="4.10" viewBox="-3.1 -2.05 6.2 4.1"><path d="M-2.1 -1.05 L0 1.05 L2.1 -1.05" fill="none" stroke="#505050" stroke-width="1.15"/></svg>
<svg class="a" style="left:784.00px;top:57.40px;" width="23.40" height="22.40" viewBox="0 0 23.4 22.4"><rect x="0.4" y="0.4" width="6" height="3.8" fill="#fff" stroke="#8a8a8a" stroke-width="0.8"/><rect x="6.4" y="0.4" width="6" height="3.8" fill="#fff" stroke="#8a8a8a" stroke-width="0.8"/><rect x="0.4" y="14.2" width="6" height="3.9" fill="#fff" stroke="#8a8a8a" stroke-width="0.8"/><rect x="6.4" y="14.2" width="6" height="3.9" fill="#fff" stroke="#8a8a8a" stroke-width="0.8"/><rect x="0.4" y="18.1" width="6" height="3.9" fill="#fff" stroke="#8a8a8a" stroke-width="0.8"/><rect x="6.4" y="18.1" width="6" height="3.9" fill="#fff" stroke="#8a8a8a" stroke-width="0.8"/><rect x="5" y="7.2" width="7" height="3.8" fill="#bdd3ec" stroke="#8a8a8a" stroke-width="0.8"/><path d="M11.6 4.8 L23 14.6 M22.6 4.6 L11.8 14.8" fill="none" stroke="#d9583b" stroke-width="1.8"/></svg>
<div class="a t" style="left:782.20px;top:83.00px;font-size:9.6px;line-height:13px;color:#484848;transform-origin:0 0;transform:scaleX(0.9608);letter-spacing:-0.200px;">Delete</div>
<svg class="a" style="left:790.70px;top:100.15px;" width="6.20" height="4.10" viewBox="-3.1 -2.05 6.2 4.1"><path d="M-2.1 -1.05 L0 1.05 L2.1 -1.05" fill="none" stroke="#505050" stroke-width="1.15"/></svg>
<svg class="a" style="left:817.00px;top:56.60px;" width="22.60" height="24.40" viewBox="0 0 22.6 24.4"><path d="M1.6 2.2 H17.2 M3.8 0.4 L1.6 2.2 L3.8 4 M15 0.4 L17.2 2.2 L15 4 M0.6 0.2 V4.2 M18.2 0.2 V4.2" fill="none" stroke="#2b78c4" stroke-width="0.95"/><path d="M0.4 5.8 H22.2 V21.2 H0.4Z" fill="#fff" stroke="#a6a6a6" stroke-width="0.8"/><path d="M5.6 5.8 V21.2 M13.2 5.8 V21.2 M17.8 5.8 V21.2 M0.4 9.4 H22.2 M0.4 17.6 H22.2" fill="none" stroke="#d6d6d6" stroke-width="0.7"/><rect x="6" y="9.4" width="6.5" height="8" fill="#3f7fc4"/><path d="M0.4 21.2 V23.6 H6 L7.4 22.2 H8.6 L9.8 23.8 H13.4 L15.4 21.2" fill="#fff" stroke="#b0b0b0" stroke-width="0.7"/></svg>
<div class="a t" style="left:813.40px;top:83.00px;font-size:9.6px;line-height:13px;color:#484848;letter-spacing:-0.160px;">Format</div>
<svg class="a" style="left:824.70px;top:100.15px;" width="6.20" height="4.10" viewBox="-3.1 -2.05 6.2 4.1"><path d="M-2.1 -1.05 L0 1.05 L2.1 -1.05" fill="none" stroke="#505050" stroke-width="1.15"/></svg>
<div class="a t" style="left:785.80px;top:115.10px;font-size:8.8px;line-height:12px;color:#5a5856;transform-origin:0 0;transform:scaleX(0.9169);letter-spacing:-0.200px;">Cells</div>
<svg class="a" style="left:861.70px;top:56.80px;" width="10.00" height="10.60" viewBox="0 0 10 10.6"><path d="M9.4 2.4 V0.6 H0.8 L5.6 5.3 L0.8 10 H9.4 V8.2" fill="none" stroke="#3b3b3b" stroke-width="1.4"/></svg>
<svg class="a" style="left:877.50px;top:60.75px;" width="6.20" height="4.10" viewBox="-3.1 -2.05 6.2 4.1"><path d="M-2.1 -1.05 L0 1.05 L2.1 -1.05" fill="none" stroke="#505050" stroke-width="1.15"/></svg>
<svg class="a" style="left:861.00px;top:73.40px;" width="11.00" height="12.20" viewBox="0 0 11 12.2"><rect x="0.45" y="1.2" width="10.1" height="10.3" fill="#fff" stroke="#c4c4c4" stroke-width="0.8"/><path fill="none" d="M0 0.7 H11" stroke="#444" stroke-width="1.4"/><path fill="none" d="M0 11.6 H11" stroke="#7a7a7a" stroke-width="0.9"/><path d="M5.5 3.4 V9.4 M3 7 L5.5 9.5 L8 7" fill="none" stroke="#2b78c4" stroke-width="1.1"/></svg>
<svg class="a" style="left:875.60px;top:78.55px;" width="6.20" height="4.10" viewBox="-3.1 -2.05 6.2 4.1"><path d="M-2.1 -1.05 L0 1.05 L2.1 -1.05" fill="none" stroke="#505050" stroke-width="1.15"/></svg>
<svg class="a" style="left:861.00px;top:93.00px;" width="11.20" height="10.40" viewBox="0 0 11.2 10.4"><path d="M0.2 6.8 L7.2 0.2 L11 4 L4.2 10.2 H2.6Z" fill="#f08098"/><path d="M0.2 6.8 L2.6 4.5 L6.4 8.2 L4.2 10.2 H2.6Z" fill="#e8607e"/></svg>
<svg class="a" style="left:875.60px;top:96.75px;" width="6.20" height="4.10" viewBox="-3.1 -2.05 6.2 4.1"><path d="M-2.1 -1.05 L0 1.05 L2.1 -1.05" fill="none" stroke="#505050" stroke-width="1.15"/></svg>
<div class="a t" style="left:892.90px;top:54.20px;font-size:12.2px;line-height:16px;color:#2b78c4;">A</div>
<div class="a t" style="left:893.40px;top:65.20px;font-size:12.2px;line-height:16px;color:#a24fc0;">Z</div>
<svg class="a" style="left:903.40px;top:62.00px;" width="13.00" height="12.00" viewBox="0 0 13 12"><path d="M0.2 0.3 H12.8 L7.8 6 V11.6 L5.2 11.6 V6Z" fill="#767676"/></svg>
<div class="a t" style="left:890.80px;top:83.00px;font-size:9.6px;line-height:13px;color:#484848;letter-spacing:0.165px;">Sort &amp;</div>
<div class="a t" style="left:889.80px;top:95.70px;font-size:9.6px;line-height:13px;color:#484848;letter-spacing:-0.026px;">Filter</div>
<svg class="a" style="left:912.50px;top:100.15px;" width="6.20" height="4.10" viewBox="-3.1 -2.05 6.2 4.1"><path d="M-2.1 -1.05 L0 1.05 L2.1 -1.05" fill="none" stroke="#505050" stroke-width="1.15"/></svg>
<svg class="a" style="left:929.50px;top:57.40px;" width="21.40" height="22.00" viewBox="0 0 21.4 22"><circle cx="12.9" cy="8" r="6.9" fill="#fff" stroke="#3b82cc" stroke-width="1.9"/><path fill="none" d="M7.6 13.4 L1.6 19.7" stroke="#3b82cc" stroke-width="2.8" stroke-linecap="round"/></svg>
<div class="a t" style="left:925.60px;top:83.00px;font-size:9.6px;line-height:13px;color:#484848;letter-spacing:0.111px;">Find &amp;</div>
<div class="a t" style="left:922.60px;top:95.70px;font-size:9.6px;line-height:13px;color:#484848;transform-origin:0 0;transform:scaleX(0.9657);letter-spacing:-0.200px;">Select</div>
<svg class="a" style="left:949.80px;top:100.15px;" width="6.20" height="4.10" viewBox="-3.1 -2.05 6.2 4.1"><path d="M-2.1 -1.05 L0 1.05 L2.1 -1.05" fill="none" stroke="#505050" stroke-width="1.15"/></svg>
<div class="a t" style="left:895.30px;top:115.10px;font-size:8.8px;line-height:12px;color:#5a5856;transform-origin:0 0;transform:scaleX(0.9725);letter-spacing:-0.200px;">Editing</div>
<svg class="a" style="left:1009.00px;top:119.60px;" width="8.00" height="5.00" viewBox="0 0 8 5"><path d="M0.5 4.4 L4 1 L7.5 4.4" fill="none" stroke="#444" stroke-width="1.1"/></svg>
<div class="a" style="left:0;top:194px;width:1007.5px;height:314px;overflow:hidden;background:#fff;">
<div class="a" style="left:0.00px;top:0.00px;width:1007.50px;height:18.00px;background:#e6e6e6;"></div>
<div class="a" style="left:0.00px;top:0.00px;width:30.00px;height:314.00px;background:#e6e6e6;"></div>
<div class="a" style="left:30.00px;top:0.00px;width:220.00px;height:16.80px;background:#d2d2d2;"></div>
<div class="a" style="left:30.00px;top:16.60px;width:220.00px;height:1.60px;background:#217346;"></div>
<svg class="a" style="left:14.50px;top:2.60px;" width="13.00" height="12.60" viewBox="0 0 13 12.6"><path d="M13 0 V12.6 H0Z" fill="#b7b7b7"/></svg>
<svg class="a" style="left:0.00px;top:0.00px;" width="1007.50" height="314.00" viewBox="0 0 1007.5 314"><path d="M30 36.67 H1007.5 M30 55.33 H1007.5 M30 74.00 H1007.5 M30 92.67 H1007.5 M30 111.34 H1007.5 M30 130.00 H1007.5 M30 148.67 H1007.5 M30 167.34 H1007.5 M30 186.00 H1007.5 M30 204.67 H1007.5 M30 223.34 H1007.5 M30 242.00 H1007.5 M30 260.67 H1007.5 M30 279.34 H1007.5 M30 298.00 H1007.5 M30 316.67 H1007.5 M250.00 18.00 V314 M321.30 18.00 V314 M392.50 18.00 V314 M485.50 18.00 V314 M524.50 18.00 V314 M616.50 18.00 V314 M687.50 18.00 V314 M767.50 18.00 V314 M839.50 18.00 V314 M910.50 18.00 V314 M982.50 18.00 V314 " stroke="#e2e2e2" stroke-width="1" fill="none"/><path d="M0 36.67 H30 M0 55.33 H30 M0 74.00 H30 M0 92.67 H30 M0 111.34 H30 M0 130.00 H30 M0 148.67 H30 M0 167.34 H30 M0 186.00 H30 M0 204.67 H30 M0 223.34 H30 M0 242.00 H30 M0 260.67 H30 M0 279.34 H30 M0 298.00 H30 M0 316.67 H30 " stroke="#cfcfcf" stroke-width="1" fill="none"/><path d="M250.00 1 V18.00 M321.30 1 V18.00 M392.50 1 V18.00 M485.50 1 V18.00 M524.50 1 V18.00 M616.50 1 V18.00 M687.50 1 V18.00 M767.50 1 V18.00 M839.50 1 V18.00 M910.50 1 V18.00 M982.50 1 V18.00 M30 1 V18.00 " stroke="#b9b9b9" stroke-width="1" fill="none"/><path d="M30 18.00 V314" stroke="#c4c4c4" stroke-width="1" fill="none"/><path d="M250 18.50 H1007.5" stroke="#dddddd" stroke-width="1" fill="none"/></svg>
<div class="a t" style="left:30px;width:220px;top:0.40px;height:17px;line-height:17px;font-size:15px;text-align:center;color:#217346;">A</div>
<div class="a t" style="left:250px;width:71.30000000000001px;top:0.40px;height:17px;line-height:17px;font-size:15px;text-align:center;color:#262626;">B</div>
<div class="a t" style="left:321.3px;width:71.19999999999999px;top:0.40px;height:17px;line-height:17px;font-size:15px;text-align:center;color:#262626;">C</div>
<div class="a t" style="left:392.5px;width:93.0px;top:0.40px;height:17px;line-height:17px;font-size:15px;text-align:center;color:#262626;">D</div>
<div class="a t" style="left:485.5px;width:39.0px;top:0.40px;height:17px;line-height:17px;font-size:15px;text-align:center;color:#262626;">E</div>
<div class="a t" style="left:524.5px;width:92.0px;top:0.40px;height:17px;line-height:17px;font-size:15px;text-align:center;color:#262626;">F</div>
<div class="a t" style="left:616.5px;width:71.0px;top:0.40px;height:17px;line-height:17px;font-size:15px;text-align:center;color:#262626;">G</div>
<div class="a t" style="left:687.5px;width:80.0px;top:0.40px;height:17px;line-height:17px;font-size:15px;text-align:center;color:#262626;">H</div>
<div class="a t" style="left:767.5px;width:72.0px;top:0.40px;height:17px;line-height:17px;font-size:15px;text-align:center;color:#262626;">I</div>
<div class="a t" style="left:839.5px;width:71.0px;top:0.40px;height:17px;line-height:17px;font-size:15px;text-align:center;color:#262626;">J</div>
<div class="a t" style="left:910.5px;width:72.0px;top:0.40px;height:17px;line-height:17px;font-size:15px;text-align:center;color:#262626;">K</div>
<div class="a" style="left:249.30px;top:243.00px;width:1.60px;height:17.07px;background:#fff;"></div>
<div class="a t" style="left:0;width:30px;text-align:center;top:18.13px;height:19px;line-height:19px;font-size:15px;color:#000;color:#111;">17</div>
<div class="a t" style="left:32.6px;top:18.13px;height:19px;line-height:19px;font-size:15px;color:#000;">Accumulated Dep - Equipment</div>
<div class="a t" style="left:524.5px;width:84.4px;text-align:right;top:18.13px;height:19px;line-height:19px;font-size:15px;color:#000;">75,000</div>
<div class="a t" style="left:0;width:30px;text-align:center;top:36.80px;height:19px;line-height:19px;font-size:15px;color:#000;color:#111;">18</div>
<div class="a t" style="left:32.6px;top:36.80px;height:19px;line-height:19px;font-size:15px;color:#000;">Accumulated Dep - Automobiles</div>
<div class="a t" style="left:524.5px;width:84.4px;text-align:right;top:36.80px;height:19px;line-height:19px;font-size:15px;color:#000;">19,000</div>
<div class="a t" style="left:0;width:30px;text-align:center;top:55.47px;height:19px;line-height:19px;font-size:15px;color:#000;color:#111;">19</div>
<div class="a t" style="left:32.6px;top:55.47px;height:19px;line-height:19px;font-size:15px;color:#000;">Patent</div>
<div class="a t" style="left:392.5px;width:85.7px;text-align:right;top:55.47px;height:19px;line-height:19px;font-size:15px;color:#000;">3,000</div>
<div class="a t" style="left:0;width:30px;text-align:center;top:74.13px;height:19px;line-height:19px;font-size:15px;color:#000;color:#111;">20</div>
<div class="a t" style="left:32.6px;top:74.13px;height:19px;line-height:19px;font-size:15px;color:#000;">Sales</div>
<div class="a t" style="left:524.5px;width:84.4px;text-align:right;top:74.13px;height:19px;line-height:19px;font-size:15px;color:#000;">375,000</div>
<div class="a t" style="left:0;width:30px;text-align:center;top:92.80px;height:19px;line-height:19px;font-size:15px;color:#000;color:#111;">21</div>
<div class="a t" style="left:32.6px;top:92.80px;height:19px;line-height:19px;font-size:15px;color:#000;">Sales Returns</div>
<div class="a t" style="left:392.5px;width:85.7px;text-align:right;top:92.80px;height:19px;line-height:19px;font-size:15px;color:#000;">5,000</div>
<div class="a t" style="left:0;width:30px;text-align:center;top:111.47px;height:19px;line-height:19px;font-size:15px;color:#000;color:#111;">22</div>
<div class="a t" style="left:32.6px;top:111.47px;height:19px;line-height:19px;font-size:15px;color:#000;">Non Controlling Interest</div>
<div class="a t" style="left:524.5px;width:84.4px;text-align:right;top:111.47px;height:19px;line-height:19px;font-size:15px;color:#000;">3,500</div>
<div class="a t" style="left:0;width:30px;text-align:center;top:130.14px;height:19px;line-height:19px;font-size:15px;color:#000;color:#111;">23</div>
<div class="a t" style="left:32.6px;top:130.14px;height:19px;line-height:19px;font-size:15px;color:#000;">Cost of Goods Sold</div>
<div class="a t" style="left:392.5px;width:85.7px;text-align:right;top:130.14px;height:19px;line-height:19px;font-size:15px;color:#000;">150,000</div>
<div class="a t" style="left:0;width:30px;text-align:center;top:148.80px;height:19px;line-height:19px;font-size:15px;color:#000;color:#111;">24</div>
<div class="a t" style="left:32.6px;top:148.80px;height:19px;line-height:19px;font-size:15px;color:#000;">Accounts Payable</div>
<div class="a t" style="left:524.5px;width:84.4px;text-align:right;top:148.80px;height:19px;line-height:19px;font-size:15px;color:#000;">52,000</div>
<div class="a t" style="left:0;width:30px;text-align:center;top:167.47px;height:19px;line-height:19px;font-size:15px;color:#000;color:#111;">25</div>
<div class="a t" style="left:32.6px;top:167.47px;height:19px;line-height:19px;font-size:15px;color:#000;">Wages Payable</div>
<div class="a t" style="left:524.5px;width:84.4px;text-align:right;top:167.47px;height:19px;line-height:19px;font-size:15px;color:#000;">13,000</div>
<div class="a t" style="left:0;width:30px;text-align:center;top:186.14px;height:19px;line-height:19px;font-size:15px;color:#000;color:#111;">26</div>
<div class="a t" style="left:32.6px;top:186.14px;height:19px;line-height:19px;font-size:15px;color:#000;">Long-Term Note</div>
<div class="a t" style="left:524.5px;width:84.4px;text-align:right;top:186.14px;height:19px;line-height:19px;font-size:15px;color:#000;">200,000</div>
<div class="a t" style="left:0;width:30px;text-align:center;top:204.80px;height:19px;line-height:19px;font-size:15px;color:#000;color:#111;">27</div>
<div class="a t" style="left:32.6px;top:204.80px;height:19px;line-height:19px;font-size:15px;color:#000;">Retained Earnings, Beginning</div>
<div class="a t" style="left:524.5px;width:84.4px;text-align:right;top:204.80px;height:19px;line-height:19px;font-size:15px;color:#000;">284,000</div>
<div class="a t" style="left:0;width:30px;text-align:center;top:223.47px;height:19px;line-height:19px;font-size:15px;color:#000;color:#111;">28</div>
<div class="a t" style="left:32.6px;top:223.47px;height:19px;line-height:19px;font-size:15px;color:#000;">Common Stock</div>
<div class="a t" style="left:524.5px;width:84.4px;text-align:right;top:223.47px;height:19px;line-height:19px;font-size:15px;color:#000;">233,750</div>
<div class="a t" style="left:0;width:30px;text-align:center;top:242.14px;height:19px;line-height:19px;font-size:15px;color:#000;color:#111;">29</div>
<div class="a t" style="left:32.6px;top:242.14px;height:19px;line-height:19px;font-size:15px;color:#000;">Additional Paid in Capital- Common</div>
<div class="a t" style="left:524.5px;width:84.4px;text-align:right;top:242.14px;height:19px;line-height:19px;font-size:15px;color:#000;">27,000</div>
<div class="a t" style="left:0;width:30px;text-align:center;top:260.80px;height:19px;line-height:19px;font-size:15px;color:#000;color:#111;">30</div>
<div class="a t" style="left:32.6px;top:260.80px;height:19px;line-height:19px;font-size:15px;color:#000;">Treasury Stock</div>
<div class="a t" style="left:392.5px;width:85.7px;text-align:right;top:260.80px;height:19px;line-height:19px;font-size:15px;color:#000;">4,000</div>
<div class="a t" style="left:0;width:30px;text-align:center;top:279.47px;height:19px;line-height:19px;font-size:15px;color:#000;color:#111;">31</div>
<div class="a t" style="left:32.6px;top:279.47px;height:19px;line-height:19px;font-size:15px;color:#000;">Wage Expense</div>
<div class="a t" style="left:392.5px;width:85.7px;text-align:right;top:279.47px;height:19px;line-height:19px;font-size:15px;color:#000;">41,000</div>
<div class="a t" style="left:0;width:30px;text-align:center;top:298.14px;height:19px;line-height:19px;font-size:15px;color:#000;color:#111;">32</div>
<div class="a t" style="left:32.6px;top:298.14px;height:19px;line-height:19px;font-size:15px;color:#000;">Rent Expense</div>
<div class="a t" style="left:392.5px;width:85.7px;text-align:right;top:298.14px;height:19px;line-height:19px;font-size:15px;color:#000;">12,000</div>
</div>
<div class="a" style="left:1007.00px;top:212.00px;width:1.00px;height:296.00px;background:#bdbdbd;"></div>
<div class="a" style="left:0.00px;top:507.60px;width:1008.00px;height:1.00px;background:#a6a6a6;"></div>
<div class="a" style="left:1008.00px;top:207.60px;width:16.00px;height:289.00px;background:#d9d9d9;"></div>
<div class="a" style="left:1009.40px;top:194.60px;width:12.80px;height:12.80px;background:#fff;border:1px solid #cdcdcd;"></div>
<svg class="a" style="left:1012.40px;top:199.40px;" width="6.60" height="3.40" viewBox="0 0 6.6 3.4"><path d="M0 3.4 L3.3 0 L6.6 3.4Z" fill="#606060"/></svg>
<div class="a" style="left:1009.40px;top:261.00px;width:12.80px;height:49.40px;background:#fff;border:1px solid #cdcdcd;"></div>
<div class="a" style="left:1009.40px;top:496.20px;width:12.80px;height:12.60px;background:#fff;border:1px solid #cdcdcd;"></div>
<svg class="a" style="left:1012.50px;top:500.80px;" width="6.60" height="3.40" viewBox="0 0 6.6 3.4"><path d="M0 0 L3.3 3.4 L6.6 0Z" fill="#606060"/></svg>
<div class="a" style="left:0.00px;top:508.50px;width:1024.00px;height:17.50px;background:#e6e6e6;"></div>
<svg class="a" style="left:15.50px;top:513.60px;" width="4.00" height="6.40" viewBox="0 0 4 6.4"><path d="M4 0 V6.4 L0 3.2Z" fill="#c6c6c6"/></svg>
<svg class="a" style="left:33.80px;top:513.60px;" width="4.00" height="6.40" viewBox="0 0 4 6.4"><path d="M0 0 V6.4 L4 3.2Z" fill="#c6c6c6"/></svg>
<div class="a" style="left:63.80px;top:508.40px;width:77.40px;height:16.60px;background:#fff;"></div>
<div class="a" style="left:63.40px;top:523.50px;width:78.20px;height:1.70px;background:#217346;"></div>
<div class="a t" style="left:69.80px;top:510.00px;font-size:10.2px;line-height:13px;color:#217346;font-weight:700;letter-spacing:0.173px;">Trial Balance</div>
<svg class="a" style="left:162.00px;top:511.80px;" width="11.00" height="11.00" viewBox="0 0 11 11"><circle cx="5.5" cy="5.5" r="4.9" fill="none" stroke="#767676" stroke-width="0.9"/><path fill="none" d="M5.5 2.8 V8.2 M2.8 5.5 H8.2" stroke="#767676" stroke-width="0.9"/></svg>
<svg class="a" style="left:612.00px;top:511.60px;" width="3.00" height="10.00" viewBox="0 0 3 10"><circle cx="1.2" cy="1.8" r="0.75" fill="#9a9a9a"/><circle cx="1.2" cy="4.8" r="0.75" fill="#9a9a9a"/><circle cx="1.2" cy="7.8" r="0.75" fill="#9a9a9a"/></svg>
<div class="a" style="left:623.50px;top:511.20px;width:384.50px;height:12.00px;background:#d9d9d9;"></div>
<div class="a" style="left:623.40px;top:510.40px;width:13.00px;height:13.00px;background:#fff;border:1px solid #cdcdcd;"></div>
<svg class="a" style="left:627.90px;top:513.70px;" width="3.80" height="6.60" viewBox="0 0 3.8 6.6"><path d="M3.8 0 V6.6 L0 3.3Z" fill="#606060"/></svg>
<div class="a" style="left:636.40px;top:510.40px;width:325.40px;height:13.00px;background:#fff;border:1px solid #cdcdcd;"></div>
<div class="a" style="left:995.30px;top:510.40px;width:13.00px;height:13.00px;background:#fff;border:1px solid #cdcdcd;"></div>
<svg class="a" style="left:1000.20px;top:513.70px;" width="3.80" height="6.60" viewBox="0 0 3.8 6.6"><path d="M0 0 V6.6 L3.8 3.3Z" fill="#606060"/></svg>
<div class="a" style="left:0.00px;top:526.00px;width:1024.00px;height:18.00px;background:#f3f2f1;"></div>
<div class="a" style="left:0.00px;top:525.60px;width:1024.00px;height:0.80px;background:#dcdcdc;"></div>
<div class="a t" style="left:5.80px;top:530.00px;font-size:8.8px;line-height:12px;color:#555;transform-origin:0 0;transform:scaleX(0.9011);letter-spacing:-0.200px;">Ready</div>
<div class="a" style="left:787.60px;top:526.40px;width:30.60px;height:17.80px;background:#d2d0ce;"></div>
<svg class="a" style="left:796.60px;top:530.60px;" width="10.00" height="9.00" viewBox="0 0 10 9"><rect x="0.5" y="0.5" width="9" height="8" fill="none" stroke="#555" stroke-width="1"/><path fill="none" d="M0.5 3.2 H9.5 M0.5 5.9 H9.5 M3.5 0.5 V8.5 M6.5 0.5 V8.5" stroke="#555" stroke-width="0.9"/></svg>
<svg class="a" style="left:829.60px;top:530.60px;" width="10.00" height="9.00" viewBox="0 0 10 9"><rect x="0.5" y="0.5" width="9" height="8" fill="none" stroke="#555" stroke-width="1"/><rect x="2.7" y="2" width="4.6" height="5" fill="none" stroke="#555" stroke-width="0.9"/><path fill="none" d="M4 3.8 H6 M4 5.2 H6" stroke="#777" stroke-width="0.5"/></svg>
<svg class="a" style="left:861.80px;top:530.20px;" width="10.00" height="9.40" viewBox="0 0 10 9.4"><rect x="0.5" y="0.5" width="9" height="8.4" fill="none" stroke="#555" stroke-width="1"/><path d="M3.2 0.5 V4.6 H9.5 M6.3 0.5 V4.6" fill="none" stroke="#555" stroke-width="0.9"/></svg>
<div class="a" style="left:886.80px;top:535.00px;width:5.40px;height:0.90px;background:#7a7a7a;"></div>
<div class="a" style="left:897.70px;top:535.00px;width:78.50px;height:0.90px;background:#9a9a9a;"></div>
<div class="a" style="left:937.40px;top:532.00px;width:0.90px;height:6.60px;background:#b0b0b0;"></div>
<div class="a" style="left:940.00px;top:530.20px;width:3.40px;height:10.40px;background:#7a7a7a;"></div>
<div class="a" style="left:980.40px;top:535.00px;width:6.00px;height:0.90px;background:#7a7a7a;"></div>
<div class="a" style="left:983.00px;top:532.40px;width:0.90px;height:6.00px;background:#7a7a7a;"></div>
<div class="a t" style="left:997.20px;top:530.00px;font-size:8.6px;line-height:12px;color:#666;transform-origin:0 0;transform:scaleX(0.9816);letter-spacing:-0.200px;">140%</div>
<div class="a" style="left:0.00px;top:544.00px;width:1024.00px;height:32.00px;background:#1d1e20;"></div>
<div class="a" style="left:0.00px;top:544.00px;width:38.00px;height:32.00px;background:#2a2e34;"></div>
<svg class="a" style="left:12.60px;top:553.60px;" width="13.00" height="13.00" viewBox="0 0 13 13"><path d="M0 1.8 L5.8 1 V6.1 H0Z M6.6 0.9 L13 0 V6.1 H6.6Z M0 6.9 H5.8 V12 L0 11.2Z M6.6 6.9 H13 V13 L6.6 12.1Z" fill="#fff"/></svg>
<div class="a" style="left:38.00px;top:544.00px;width:276.00px;height:32.00px;background:#f3f3f3;"></div>
<div class="a" style="left:38.00px;top:544.00px;width:276.00px;height:0.80px;background:#cfcfcf;"></div>
<svg class="a" style="left:47.60px;top:552.60px;" width="13.00" height="13.40" viewBox="0 0 13 13.4"><circle cx="8" cy="5" r="4.3" fill="none" stroke="#222" stroke-width="1.1"/><path fill="none" d="M5 8.2 L0.6 12.8" stroke="#222" stroke-width="1.2"/></svg>
<div class="a t" style="left:70.60px;top:553.80px;font-size:11.4px;line-height:14px;color:#1f1f1f;letter-spacing:0.236px;">Type here to search</div>
<svg class="a" style="left:326.10px;top:552.80px;" width="13.60" height="13.60" viewBox="0 0 13.6 13.6"><circle cx="6.8" cy="6.8" r="5.4" fill="none" stroke="#fff" stroke-width="1.7"/></svg>
<svg class="a" style="left:364.60px;top:553.60px;" width="14.40" height="12.40" viewBox="0 0 14.4 12.4"><rect x="0.5" y="3.7" width="8.8" height="5.2" fill="none" stroke="#f0f0f0" stroke-width="0.9"/><path fill="none" d="M0.2 1.7 H9.6 M0.2 10.8 H9.6" stroke="#f0f0f0" stroke-width="0.9"/><path fill="none" d="M12 0.1 V12.1" stroke="#f0f0f0" stroke-width="0.9"/><rect x="12" y="3.6" width="1.7" height="2.2" fill="#f0f0f0"/></svg>
<svg class="a" style="left:401.80px;top:550.60px;" width="20.00" height="18.00" viewBox="0 0 20 18"><circle cx="11.4" cy="9" r="8.4" fill="#ee6a4c"/><path d="M11.4 0.6 A8.4 8.4 0 0 1 19.8 9 H11.4Z" fill="#f49a7a"/><path d="M11.4 9 H19.8 A8.4 8.4 0 0 1 4.6 14 Z" fill="#d4482c"/><rect x="0.2" y="4.2" width="9.6" height="9.6" rx="1" fill="#c43e1c"/><text x="2.6" y="12" font-family="Liberation Sans" font-weight="700" font-size="8.4" fill="#fff">P</text></svg>
<div class="a" style="left:396.00px;top:574.00px;width:25.50px;height:2.00px;background:#76b9ed;"></div>
<div class="a" style="left:421.50px;top:574.00px;width:7.50px;height:2.00px;background:#5d93bd;"></div>
<div class="a" style="left:433.00px;top:544.00px;width:35.40px;height:32.00px;background:#464648;"></div>
<div class="a" style="left:468.40px;top:544.00px;width:3.60px;height:32.00px;background:#38383a;"></div>
<svg class="a" style="left:442.80px;top:550.60px;" width="19.00" height="18.00" viewBox="0 0 19 18"><rect x="5" y="0.6" width="13.6" height="16.8" rx="1" fill="#21a366"/><rect x="5" y="0.6" width="6.8" height="4.2" fill="#21a366"/><rect x="11.8" y="0.6" width="6.8" height="4.2" fill="#33c481"/><rect x="5" y="4.8" width="6.8" height="4.2" fill="#107c41"/><rect x="11.8" y="4.8" width="6.8" height="4.2" fill="#21a366"/><rect x="5" y="9" width="6.8" height="4.2" fill="#185c37"/><rect x="11.8" y="9" width="6.8" height="4.2" fill="#107c41"/><rect x="5" y="13.2" width="13.6" height="4.2" fill="#185c37"/><rect x="0.2" y="4.2" width="9.6" height="9.6" rx="1" fill="#107c41"/><text x="2.4" y="12" font-family="Liberation Sans" font-weight="700" font-size="8.4" fill="#fff">X</text></svg>
<div class="a" style="left:433.00px;top:574.00px;width:35.40px;height:2.00px;background:#76b9ed;"></div>
<svg class="a" style="left:483.00px;top:552.60px;" width="18.00" height="14.60" viewBox="0 0 18 14.6"><rect x="0.5" y="0.5" width="17" height="13.6" fill="#000" stroke="#cfcfcf" stroke-width="1"/><rect x="0.5" y="0.5" width="17" height="2" fill="#d8d8d8"/><path fill="none" d="M2 4.6 H5.4 M2 6 H7.6" stroke="#bbb" stroke-width="0.7"/></svg>
<div class="a" style="left:476.00px;top:574.00px;width:33.00px;height:2.00px;background:#76b9ed;"></div>
<svg class="a" style="left:523.60px;top:551.20px;" width="17.60" height="17.60" viewBox="0 0 17.6 17.6"><rect x="0" y="0" width="17.6" height="17.6" rx="1" fill="#1a8fe6"/><rect x="0" y="0" width="17.6" height="8" fill="#49b4f5"/><path d="M0 17.6 V12.4 L6.2 5.6 L12 12 L17.6 17.6Z" fill="#0d5fb4"/><path d="M6.6 17.6 L12 11.2 L17.6 15 V17.6Z" fill="#083f86"/><circle cx="12.4" cy="4.6" r="1.5" fill="#fff"/></svg>
<div class="a" style="left:516.00px;top:574.00px;width:33.40px;height:2.00px;background:#76b9ed;"></div>
<svg class="a" style="left:562.40px;top:551.00px;" width="19.60" height="18.00" viewBox="0 0 19.6 18"><circle cx="16" cy="4.4" r="2" fill="#5b5fc7"/><rect x="13" y="7" width="6.4" height="7.4" rx="2" fill="#5b5fc7"/><circle cx="10.4" cy="3.2" r="2.8" fill="#7b83eb"/><path d="M5.4 7 H15 V13 A4.8 4.8 0 0 1 5.4 13Z" fill="#7b83eb"/><rect x="0.2" y="4.6" width="9.6" height="9.6" rx="1" fill="#4b53bc"/><text x="2.7" y="12.3" font-family="Liberation Sans" font-weight="700" font-size="8.2" fill="#fff">T</text></svg>
<div class="a" style="left:556.00px;top:574.00px;width:33.40px;height:2.00px;background:#76b9ed;"></div>
<div class="a" style="left:738.60px;top:544.00px;width:14.20px;height:32.00px;background:#f0f0f0;"></div>
<svg class="a" style="left:742.60px;top:549.60px;" width="6.40" height="4.00" viewBox="0 0 6.4 4"><path d="M0.4 3.6 L3.2 0.7 L6 3.6" fill="none" stroke="#333" stroke-width="1.2"/></svg>
<svg class="a" style="left:742.60px;top:567.40px;" width="6.40" height="4.00" viewBox="0 0 6.4 4"><path d="M0.4 0.4 L3.2 3.3 L6 0.4" fill="none" stroke="#444" stroke-width="1"/></svg>
<svg class="a" style="left:774.80px;top:552.60px;" width="15.60" height="15.60" viewBox="0 0 15.6 15.6"><defs><linearGradient id="sun" x1="0" y1="0" x2="0.6" y2="1"><stop offset="0" stop-color="#ffd84a"/><stop offset="1" stop-color="#f6a318"/></linearGradient></defs><circle cx="7.8" cy="7.8" r="7.6" fill="url(#sun)"/></svg>
<div class="a t" style="left:798.80px;top:554.00px;font-size:10.6px;line-height:14px;color:#fff;transform-origin:0 0;transform:scaleX(0.9954);letter-spacing:-0.200px;">43°F</div>
<svg class="a" style="left:834.60px;top:557.40px;" width="9.60" height="5.60" viewBox="0 0 9.6 5.6"><path d="M0.5 5.2 L4.8 0.8 L9.1 5.2" fill="none" stroke="#fff" stroke-width="0.95"/></svg>
<svg class="a" style="left:854.60px;top:554.20px;" width="9.00" height="11.60" viewBox="0 0 9 11.6"><rect x="0.5" y="2.6" width="5.6" height="6.4" rx="0.8" fill="none" stroke="#fff" stroke-width="0.9"/><path d="M6.1 5 L8.5 3.6 V8 L6.1 6.6" fill="none" stroke="#fff" stroke-width="0.8"/><path fill="none" d="M1.4 0.5 H5.2 M1.4 11.1 H5.2" stroke="#fff" stroke-width="0.8"/></svg>
<svg class="a" style="left:872.60px;top:554.40px;" width="11.60" height="10.60" viewBox="0 0 11.6 10.6"><path d="M1 10 A9.6 9.6 0 0 1 10.8 1" fill="none" stroke="#9a9a9a" stroke-width="0.9"/><path d="M3.4 10 A7 7 0 0 1 10.8 3.6" fill="none" stroke="#fff" stroke-width="1"/><path d="M5.8 10 A4.6 4.6 0 0 1 10.8 6" fill="none" stroke="#fff" stroke-width="1"/><circle cx="9.6" cy="9.2" r="1.1" fill="#fff"/></svg>
<svg class="a" style="left:890.60px;top:556.20px;" width="13.60" height="7.40" viewBox="0 0 13.6 7.4"><rect x="0.5" y="0.5" width="11.4" height="6.4" fill="none" stroke="#fff" stroke-width="1"/><rect x="1.6" y="1.6" width="8.6" height="4.2" fill="#fff"/><rect x="12.2" y="2.2" width="1.3" height="3" fill="#fff"/></svg>
<svg class="a" style="left:910.20px;top:554.40px;" width="12.60" height="10.60" viewBox="0 0 12.6 10.6"><path d="M0.5 3.7 H2.6 L5.6 0.9 V9.7 L2.6 6.9 H0.5Z" fill="none" stroke="#fff" stroke-width="0.9"/><path d="M7.4 3.4 Q8.6 5.3 7.4 7.2 M9.2 2 Q11.2 5.3 9.2 8.6" fill="none" stroke="#fff" stroke-width="0.8"/><path d="M10.9 0.8 Q13.6 5.3 10.9 9.8" fill="none" stroke="#9a9a9a" stroke-width="0.8"/></svg>
<div class="a t" style="left:933.40px;top:546.20px;font-size:9.6px;line-height:13px;color:#fff;letter-spacing:0.022px;">11:25 AM</div>
<div class="a t" style="left:931.80px;top:561.40px;font-size:9.6px;line-height:13px;color:#fff;letter-spacing:0.087px;">10/4/2021</div>
<svg class="a" style="left:991.60px;top:553.40px;" width="13.00" height="12.00" viewBox="0 0 13 12"><path d="M0.3 0.3 H12.7 V9 H4.6 L2 11.8 V9 H0.3Z" fill="#fff"/><path d="M2.6 2.9 H10.4 M2.6 4.8 H10.4 M2.6 6.7 H8" fill="none" stroke="#1d1e20" stroke-width="0.6"/></svg>
<svg class="a" style="left:998.00px;top:560.60px;" width="11.60" height="11.60" viewBox="0 0 11.6 11.6"><circle cx="5.8" cy="5.8" r="5.2" fill="#1d1e20" stroke="#d0d0d0" stroke-width="0.9"/><text x="3.4" y="8.7" font-family="Liberation Sans" font-size="8" fill="#fff">3</text></svg>
<div class="a" style="left:1020.60px;top:544.00px;width:0.80px;height:32.00px;background:#5a5d60;"></div>
</div></body></html>
